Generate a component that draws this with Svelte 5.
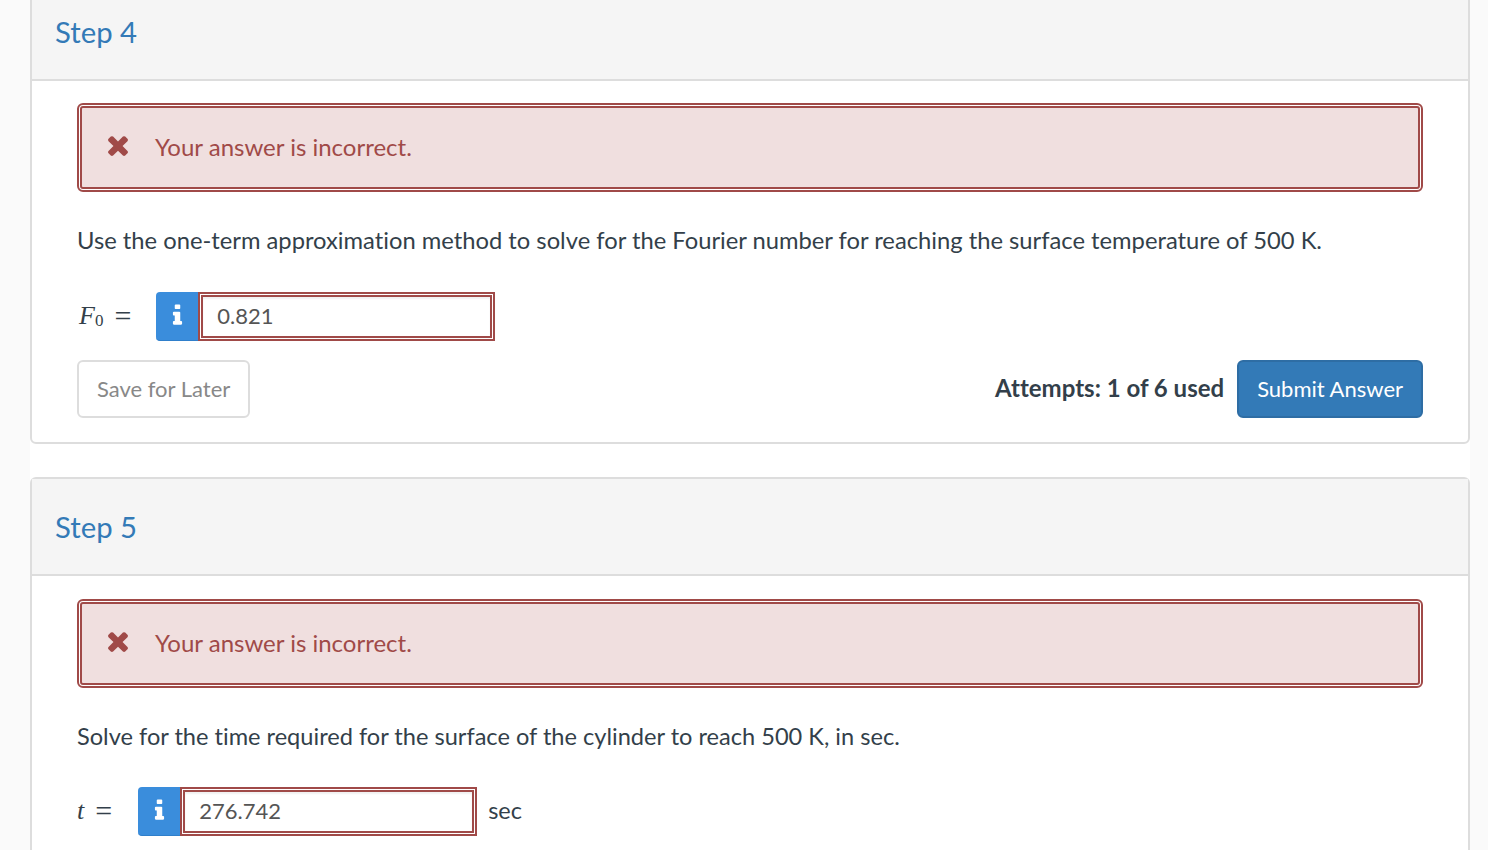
<script>
	const steps = [
		{
			title: 'Step 4',
			text: 'Use the one-term approximation method to solve for the Fourier number for reaching the surface temperature of 500 K.',
			symbol: 'F',
			sub: '0',
			value: '0.821',
			unit: '',
			actions: true
		},
		{
			title: 'Step 5',
			text: 'Solve for the time required for the surface of the cylinder to reach 500 K, in sec.',
			symbol: 't',
			sub: '',
			value: '276.742',
			unit: 'sec',
			actions: false
		}
	];
</script>

<div class="page">
	<div class="column">
		{#each steps as step}
			<section class="panel">
				<header class="panel-heading">
					<h2>{step.title}</h2>
				</header>
				<div class="panel-body">
					<div class="alert">
						<svg class="times" viewBox="0 0 1408 1792" aria-hidden="true">
							<path
								d="M1298 1322q0 40-28 68l-136 136q-28 28-68 28t-68-28l-294-294-294 294q-28 28-68 28t-68-28l-136-136q-28-28-28-68t28-68l294-294-294-294q-28-28-28-68t28-68l136-136q28-28 68-28t68 28l294 294 294-294q28-28 68-28t68 28l136 136q28 28 28 68t-28 68l-294 294 294 294q28 28 28 68z"
							/>
						</svg>
						<span>Your answer is incorrect.</span>
					</div>

					<p class="question">{step.text}</p>

					<div class="answer-row">
						<span class="math" class:has-sub={step.sub}>
							<i>{step.symbol}</i>{#if step.sub}<sub>{step.sub}</sub>{/if}
							<span class="equals">=</span>
						</span>
						<button class="info" aria-label="Info">
							<svg viewBox="0 0 768 1792" aria-hidden="true">
								<path
									d="M704 1376v128q0 26-19 45t-45 19h-512q-26 0-45-19t-19-45v-128q0-26 19-45t45-19h64v-384h-64q-26 0-45-19t-19-45v-128q0-26 19-45t45-19h384q26 0 45 19t19 45v576h64q26 0 45 19t19 45zm-128-1152v192q0 26-19 45t-45 19h-256q-26 0-45-19t-19-45v-192q0-26 19-45t45-19h256q26 0 45 19t19 45z"
								/>
							</svg>
						</button>
						<input class="answer" type="text" value={step.value} />
						{#if step.unit}<span class="unit">{step.unit}</span>{/if}
					</div>

					{#if step.actions}
						<div class="actions">
							<button class="btn save">Save for Later</button>
							<div class="submit-group">
								<strong>Attempts: 1 of 6 used</strong>
								<button class="btn submit">Submit Answer</button>
							</div>
						</div>
					{/if}
				</div>
			</section>
		{/each}
	</div>
</div>

<style>
	:global(body) {
		margin: 0;
		background: #fafafa;
	}

	.page {
		height: 850px;
		overflow: hidden;
		padding: 0 18px 0 30px;
		font-family: Lato, 'Liberation Sans', sans-serif;
		font-size: 24px;
		color: #333f4a;
		font-variant-ligatures: none;
	}

	.column {
		background: #fff;
		margin-top: -18px;
		display: flex;
		flex-direction: column;
		gap: 33px;
		height: 900px;
	}

	.panel {
		border: 2px solid #ddd;
		border-radius: 6px;
		background: #fff;
		flex: none;
	}

	.panel-heading {
		background: #f5f5f5;
		border-bottom: 2px solid #ddd;
		padding: 0 23px;
		display: flex;
		align-items: center;
		box-sizing: border-box;
		height: 97px;
	}

	h2 {
		margin: 0;
		font-size: 29.3px;
		font-weight: 400;
		color: #337ab7;
	}

	.panel-body {
		padding: 22px 45px 24px;
	}

	.panel:last-child .panel-body {
		padding-top: 23px;
	}

	.alert {
		height: 89px;
		box-sizing: border-box;
		border: 5px double #a04a48;
		border-radius: 6px;
		background: #f0dfdf;
		background-clip: padding-box;
		color: #a04a48;
		display: flex;
		align-items: center;
		padding: 0 0 2px 24px;
		gap: 25px;
	}

	.times {
		width: 24px;
		height: 30px;
		fill: #a04a48;
		margin-top: -4px;
	}

	.question {
		margin: 31px 0 35px;
		line-height: 34px;
		font-size: 23.75px;
		white-space: nowrap;
	}

	.panel:last-child .question {
		margin-bottom: 34px;
		font-size: 23.6px;
	}

	.answer-row {
		display: flex;
		align-items: center;
		height: 49px;
	}

	.math {
		font-family: 'Liberation Serif', serif;
		display: inline-flex;
		align-items: baseline;
		white-space: nowrap;
		margin-top: -1px;
		margin-right: 26px;
		font-size: 26px;
	}

	.math.has-sub {
		padding-left: 2px;
		margin-right: 25px;
	}

	.math sub {
		font-size: 17px;
		line-height: 0;
		position: relative;
		top: 2px;
		vertical-align: baseline;
	}

	.equals {
		margin-left: 11px;
		font-size: 30px;
		line-height: 0;
		position: relative;
		top: 2px;
	}

	.info {
		width: 42px;
		height: 49px;
		box-sizing: border-box;
		border: none;
		border-bottom: 1px solid #2f7fcb;
		background: #3a8ddc;
		border-radius: 4px 0 0 4px;
		padding: 0 0 3px;
		display: flex;
		align-items: center;
		justify-content: center;
	}

	.info svg {
		width: 11px;
		height: 26px;
		fill: #fff;
	}

	.answer {
		width: 297px;
		height: 49px;
		box-sizing: border-box;
		border: 5px double #a04a48;
		background: #fff;
		padding: 0 14px 3px;
		font: inherit;
		font-size: 22px;
		color: #555;
		outline: none;
		box-shadow: inset 0 2px 2px rgba(0, 0, 0, 0.06);
	}

	.unit {
		margin: -3px 0 0 11px;
		font-size: 23.5px;
	}

	.actions {
		display: flex;
		justify-content: space-between;
		align-items: center;
		margin-top: 19px;
	}

	.submit-group {
		display: flex;
		align-items: center;
		gap: 13px;
	}

	.submit-group strong {
		font-weight: 700;
		margin-top: -3px;
	}

	.btn {
		height: 58px;
		box-sizing: border-box;
		border-radius: 6px;
		font-family: inherit;
		font-size: 22px;
		padding: 0 18px 2px;
	}

	.save {
		background: #fff;
		border: 2px solid #ddd;
		color: #888;
	}

	.submit {
		background: #337ab7;
		border: 2px solid #2e6da4;
		color: #fff;
	}
</style>
